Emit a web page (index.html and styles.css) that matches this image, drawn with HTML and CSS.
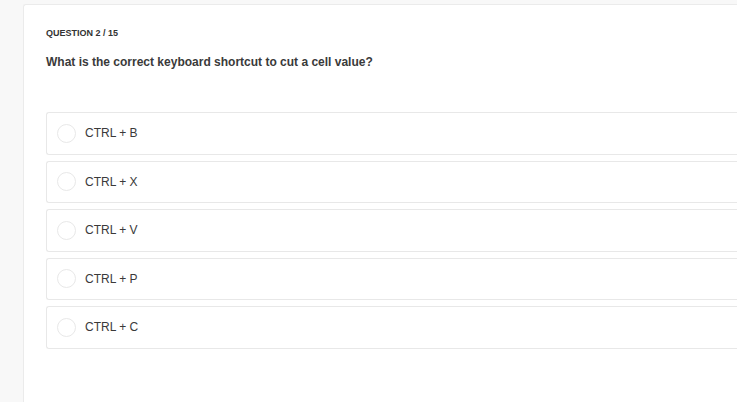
FILE: index.html
```html
<!DOCTYPE html>
<html>
<head>
<meta charset="utf-8">
<link rel="stylesheet" href="styles.css">
</head>
<body>
<div class="page">
  <div class="card">
    <div class="label">QUESTION 2 / 15</div>
    <div class="question">What is the correct keyboard shortcut to cut a cell value?</div>
    <div class="options">
      <div class="option"><span class="radio"></span><span class="text">CTRL + B</span></div>
      <div class="option"><span class="radio"></span><span class="text">CTRL + X</span></div>
      <div class="option"><span class="radio"></span><span class="text">CTRL + V</span></div>
      <div class="option"><span class="radio"></span><span class="text">CTRL + P</span></div>
      <div class="option"><span class="radio"></span><span class="text">CTRL + C</span></div>
    </div>
  </div>
</div>
</body>
</html>
```

FILE: styles.css
```css
html, body {
  margin: 0;
  padding: 0;
  background: #f8f8f8;
  font-family: "Liberation Sans", Arial, sans-serif;
  color: #333;
  overflow: hidden;
}
.page {
  padding: 4px 0 0 23px;
  height: 402px;
  box-sizing: border-box;
}
.card {
  background: #fff;
  border: 1px solid #ebebeb;
  border-right: none;
  border-bottom: none;
  border-radius: 3px 0 0 0;
  height: 398px;
  padding: 22px 0 0 22px;
  box-sizing: border-box;
}
.label {
  font-size: 9px;
  font-weight: bold;
  color: #333;
  line-height: 12px;
}
.question {
  margin-top: 15px;
  font-size: 12px;
  font-weight: bold;
  color: #3a3a3a;
  line-height: 16px;
}
.options {
  margin-top: 42px;
  display: flex;
  flex-direction: column;
  gap: 6px;
}
.option {
  height: 42.5px;
  box-sizing: border-box;
  border: 1px solid #e8e8e8;
  border-right: none;
  border-radius: 3px 0 0 3px;
  display: flex;
  align-items: center;
  padding-left: 10px;
}
.radio {
  width: 19px;
  height: 19px;
  box-sizing: border-box;
  border: 1px solid #e8e8e8;
  border-radius: 50%;
  flex: none;
}
.text {
  margin-left: 9px;
  font-size: 12px;
  color: #3a3a3a;
}
```
